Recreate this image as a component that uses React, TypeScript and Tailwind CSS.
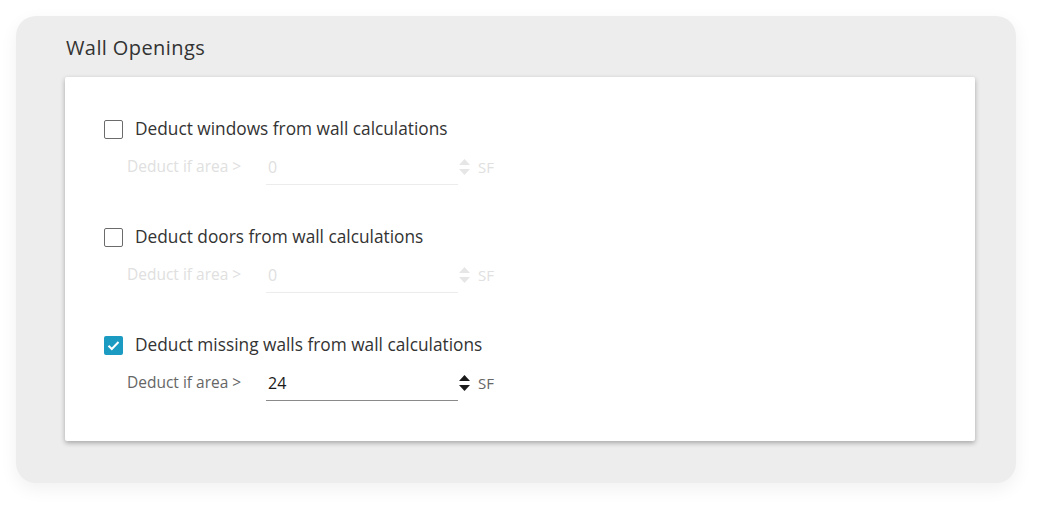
import { useState } from "react";

type Opening = {
  label: string;
  checked: boolean;
  area: string;
};

const initial: Opening[] = [
  { label: "Deduct windows from wall calculations", checked: false, area: "0" },
  { label: "Deduct doors from wall calculations", checked: false, area: "0" },
  { label: "Deduct missing walls from wall calculations", checked: true, area: "24" },
];

const Spinner = ({ enabled }: { enabled: boolean }) => (
  <svg width="13" height="22" viewBox="0 0 13 22" className="shrink-0">
    <path d="M1 9 L6.5 3 L12 9 Z" fill={enabled ? "#1a1a1a" : "#e6e6e6"} />
    <path d="M1 13 L6.5 19 L12 13 Z" fill={enabled ? "#1a1a1a" : "#e6e6e6"} />
  </svg>
);

const OpeningRow = ({ item, onToggle }: { item: Opening; onToggle: () => void }) => {
  const on = item.checked;
  return (
    <div className="flex flex-col">
      <label className="flex items-center gap-[12px] cursor-pointer h-[20px]" onClick={onToggle}>
        {on ? (
          <span className="w-[19px] h-[19px] rounded-[2px] bg-[#1b9ac2] flex items-center justify-center">
            <svg width="13" height="11" viewBox="0 0 13 11">
              <path d="M1.5 5.8 L4.8 9 L11.5 2" stroke="#fff" strokeWidth="2" fill="none" />
            </svg>
          </span>
        ) : (
          <span className="w-[19px] h-[19px] rounded-[2px] border-[1.5px] border-[#6b6b6b] bg-white" />
        )}
        <span className="text-[17.3px] text-[#333]">{item.label}</span>
      </label>
      <div className={`flex items-center pl-[23px] mt-[10px] ${on ? "text-[#666]" : "text-[#e0e0e0]"}`}>
        <span className="text-[15.5px] w-[139px]">Deduct if area &gt;</span>
        <div
          className={`w-[192px] h-[36px] flex items-center border-b ${
            on ? "border-[#8a8a8a] text-[#1a1a1a]" : "border-[#ececec] text-[#e0e0e0]"
          }`}
        >
          <span className="text-[16px] pl-[2px]">{item.area}</span>
        </div>
        <Spinner enabled={on} />
        <span className="text-[15px] ml-[7px]">SF</span>
      </div>
    </div>
  );
};

export default function App() {
  const [items, setItems] = useState(initial);

  return (
    <div className="w-[1040px] h-[507px] bg-white pt-[16px] pl-[16px] font-['Open_Sans',sans-serif]">
      <div className="w-[1000px] h-[467px] rounded-[20px] bg-[#ededed] shadow-[0_6px_18px_rgba(0,0,0,0.06)] pl-[49px] pr-[41px] pt-[17px] pb-[42px] flex flex-col">
        <h2 className="text-[20px] tracking-[0.4px] text-[#333] pl-[1px] h-[44px]">Wall Openings</h2>
        <div className="flex-1 bg-white rounded-[2px] shadow-[0_2px_5px_rgba(0,0,0,0.3)] pt-[42px] pl-[39px] flex flex-col gap-[42px]">
          {items.map((item, i) => (
            <OpeningRow
              key={item.label}
              item={item}
              onToggle={() =>
                setItems((prev) => prev.map((p, j) => (j === i ? { ...p, checked: !p.checked } : p)))
              }
            />
          ))}
        </div>
      </div>
    </div>
  );
}
